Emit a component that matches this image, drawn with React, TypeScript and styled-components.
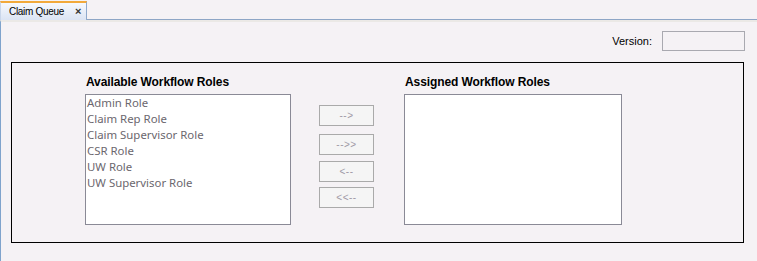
import styled, { createGlobalStyle } from 'styled-components'

const GlobalStyle = createGlobalStyle`
  html, body {
    margin: 0;
    padding: 0;
    background: #f5f2f5;
  }
`

const Screen = styled.div`
  width: 757px;
  height: 261px;
  background: #f5f2f5;
  display: flex;
  flex-direction: column;
  overflow: hidden;
  font-family: 'Liberation Sans', Arial, sans-serif;
`

const TabStrip = styled.div`
  display: flex;
  height: 20px;
  flex-shrink: 0;
`

const Tab = styled.div`
  width: 87px;
  margin-top: 1px;
  border-top: 2px solid #f2a93b;
  border-right: 1px solid #8fa9cc;
  border-left: 1px solid #c9d6ea;
  background: linear-gradient(#f6f8fd, #dbe4f4);
  display: flex;
  align-items: center;
  justify-content: space-between;
  padding: 0 5px 1px 8px;
  box-sizing: border-box;
  font-size: 10px;
  letter-spacing: -0.3px;
  color: #000;
`

const TabClose = styled.span`
  font-size: 11px;
  font-weight: bold;
  color: #333;
`

const TabRest = styled.div`
  flex: 1;
  border-bottom: 1px solid #8ea6c6;
`

const Body = styled.div`
  flex: 1;
  display: flex;
  flex-direction: column;
  border-left: 1px solid #7fa3cc;
  border-top: 2px solid #ebe9e6;
`

const VersionRow = styled.div`
  display: flex;
  justify-content: flex-end;
  align-items: center;
  gap: 10px;
  padding: 9px 12px 0 0;
  font-size: 11px;
  color: #000;
`

const VersionInput = styled.div`
  width: 81px;
  height: 18px;
  border: 1px solid #a9a9b0;
  background: #f5f2f5;
`

const GroupBox = styled.div`
  margin: 11px 0 0 10px;
  width: 733px;
  height: 181px;
  box-sizing: border-box;
  border: 1px solid #000;
  display: flex;
  align-items: flex-start;
  padding: 12px 0 0 73px;
`

const ListColumn = styled.div<{ $width: number }>`
  width: ${({ $width }) => $width}px;
  display: flex;
  flex-direction: column;
`

const ListLabel = styled.div`
  font-size: 12px;
  font-weight: bold;
  line-height: 14px;
  letter-spacing: -0.1px;
  color: #000;
  margin-bottom: 5px;
  padding-left: 1px;
`

const ListBox = styled.div`
  height: 129px;
  border: 1px solid #8a8a96;
  background: #fff;
  padding: 0 0 0 1px;
  display: flex;
  flex-direction: column;
`

const ListItem = styled.div`
  font-family: 'Noto Sans', 'Open Sans', sans-serif;
  font-size: 11.4px;
  line-height: 16px;
  color: #6b676e;
`

const ButtonColumn = styled.div`
  display: flex;
  flex-direction: column;
  margin: 0 30px 0 28px;
`

const MoveButton = styled.div<{ $top: number }>`
  width: 53px;
  height: 19px;
  margin-top: ${({ $top }) => $top}px;
  border: 1px solid #aaaaaa;
  background: #f5f5f5;
  display: flex;
  align-items: center;
  justify-content: center;
  font-size: 10px;
  color: #a09aa6;
  letter-spacing: 0.5px;
`

const availableRoles = [
  'Admin Role',
  'Claim Rep Role',
  'Claim Supervisor Role',
  'CSR Role',
  'UW Role',
  'UW Supervisor Role',
]

const moveButtons = [
  { label: '-->', top: 30 },
  { label: '-->>', top: 8 },
  { label: '<--', top: 6 },
  { label: '<<--', top: 5 },
]

export default function App() {
  return (
    <Screen>
      <GlobalStyle />
      <TabStrip>
        <Tab>
          <span>Claim Queue</span>
          <TabClose>×</TabClose>
        </Tab>
        <TabRest />
      </TabStrip>
      <Body>
        <VersionRow>
          <span>Version:</span>
          <VersionInput />
        </VersionRow>
        <GroupBox>
          <ListColumn $width={206}>
            <ListLabel>Available Workflow Roles</ListLabel>
            <ListBox>
              {availableRoles.map((role) => (
                <ListItem key={role}>{role}</ListItem>
              ))}
            </ListBox>
          </ListColumn>
          <ButtonColumn>
            {moveButtons.map((b) => (
              <MoveButton key={b.label} $top={b.top}>
                {b.label}
              </MoveButton>
            ))}
          </ButtonColumn>
          <ListColumn $width={218}>
            <ListLabel>Assigned Workflow Roles</ListLabel>
            <ListBox />
          </ListColumn>
        </GroupBox>
      </Body>
    </Screen>
  )
}
